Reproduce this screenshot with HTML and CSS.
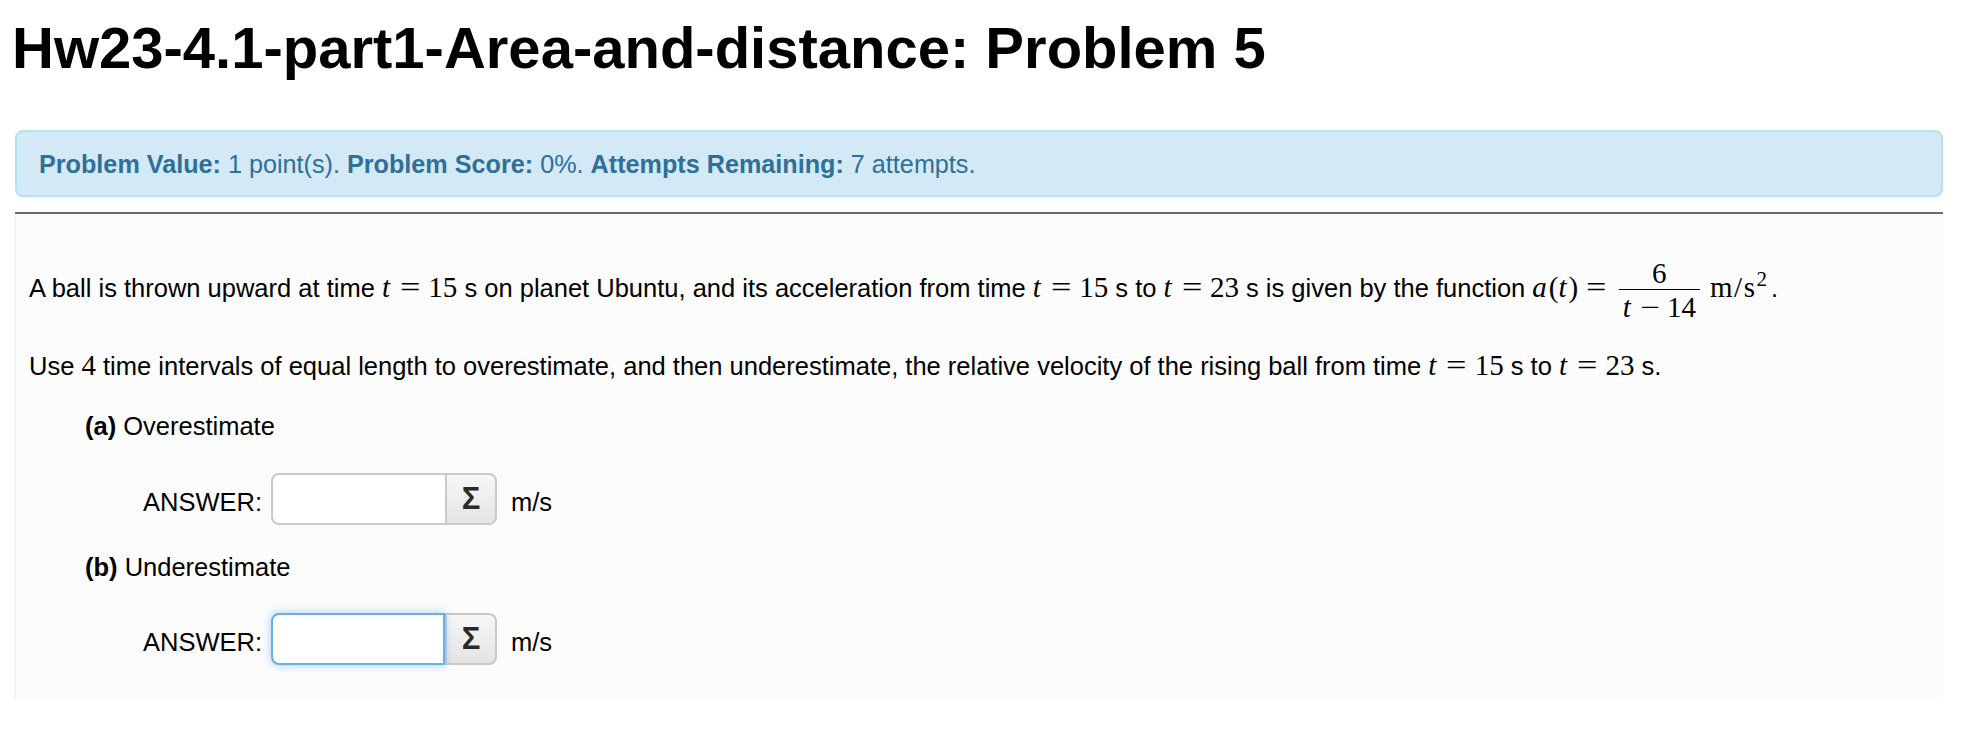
FILE: index.html
```html
<!DOCTYPE html>
<html lang="en">
<head>
<meta charset="utf-8">
<title>Hw23-4.1-part1-Area-and-distance: Problem 5</title>
<link rel="stylesheet" href="styles.css">
</head>
<body>
<div class="page">
  <h1 class="title">Hw23-4.1-part1-Area-and-distance: Problem 5</h1>
  <div class="alert"><b>Problem Value:</b> 1 point(s). <b>Problem Score:</b> 0%. <b>Attempts Remaining:</b> 7 attempts.</div>
  <hr class="rule">
  <div class="problem">
    <p class="line1">A ball is thrown upward at time <span class="m"><i>t</i><span class="op">=</span>15</span> s on planet Ubuntu, and its acceleration from time <span class="m"><i>t</i><span class="op">=</span>15</span> s to <span class="m"><i>t</i><span class="op">=</span>23</span> s is given by the function <span class="m"><i>a</i>(<i>t</i>)<span class="op">=</span><span class="frac"><span class="num">6</span><span class="den"><i>t</i><span class="minus">−</span>14</span></span><span class="unit">m/s<sup>2</sup></span></span><span class="dot">.</span></p>
    <p class="line2">Use <span class="m">4</span> time intervals of equal length to overestimate, and then underestimate, the relative velocity of the rising ball from time <span class="m"><i>t</i><span class="op">=</span>15</span> s to <span class="m"><i>t</i><span class="op">=</span>23</span> s.</p>
    <p class="part part-a"><b>(a)</b> Overestimate</p>
    <div class="answer-row row-a">
      <span class="label">ANSWER:</span>
      <span class="group">
        <span class="field"></span>
        <span class="sigma">Σ</span>
      </span>
      <span class="units">m/s</span>
    </div>
    <p class="part part-b"><b>(b)</b> Underestimate</p>
    <div class="answer-row row-b">
      <span class="label">ANSWER:</span>
      <span class="group">
        <span class="field focused"></span>
        <span class="sigma">Σ</span>
      </span>
      <span class="units">m/s</span>
    </div>
  </div>
</div>
</body>
</html>
```
FILE: styles.css
```css
html, body {
  margin: 0;
  padding: 0;
  background: #ffffff;
}
body {
  font-family: "Liberation Sans", Arial, Helvetica, sans-serif;
  font-size: 25.5px;
  line-height: 36px;
  color: #000;
}
.page {
  padding: 0 41px 0 15px;
}
.title {
  font-size: 58px;
  line-height: 64px;
  font-weight: bold;
  margin: 16px 0 50px -3px;
  color: #000;
}
.alert {
  border: 2px solid #b4e2ee;
  border-radius: 8px;
  background: #d3e9f5;
  color: #2f6f98;
  padding: 13.5px 22px;
  font-size: 25.2px;
  line-height: 36px;
}
.alert b {
  font-weight: bold;
}
.rule {
  margin: 15px 0 0;
  border: 0;
  height: 2px;
  background: #6a6a6a;
}
.problem {
  background: #fcfcfc;
  border-left: 1px solid #f0f0f0;
  padding: 46px 0 34px 13px;
}
.problem p {
  margin: 0;
}
.line2 {
  margin-top: 23px !important;
}
.m {
  font-family: "Liberation Serif", "Times New Roman", serif;
  font-size: 29px;
  line-height: 30px;
}
.m i {
  font-style: italic;
  margin-right: 2px;
}
.op {
  display: inline-block;
  margin: 0 10px;
  transform: scaleX(1.25);
}
.minus {
  display: inline-block;
  margin: 0 9px;
  transform: scaleX(1.2);
}
.frac {
  display: inline-block;
  vertical-align: -20px;
  text-align: center;
  margin: 0 4px 0 4px;
}
.num {
  display: block;
  line-height: 26px;
  padding: 0 4px 2.5px;
  border-bottom: 1.5px solid #000;
}
.den {
  display: block;
  line-height: 35px;
  padding: 0 4px;
}
.unit {
  margin-left: 6px;
  letter-spacing: 1.5px;
}
.unit sup {
  font-size: 21px;
  line-height: 0;
  vertical-align: 11px;
  letter-spacing: 0;
}
.dot {
  margin-left: 4px;
}
.part {
  margin-left: 56px !important;
}
.part-a {
  margin-top: 24px !important;
}
.part-b {
  margin-top: 24px !important;
}
.part b {
  font-weight: bold;
}
.answer-row {
  display: flex;
  align-items: flex-start;
  height: 52px;
  margin-left: 114px;
}
.row-a {
  margin-top: 29px;
}
.row-b {
  margin-top: 28px;
}
.label {
  margin-top: 11px;
  margin-right: 9px;
}
.group {
  display: flex;
  height: 52px;
}
.field {
  box-sizing: border-box;
  width: 174px;
  height: 52px;
  border: 2px solid #c9c9c9;
  border-right: 0;
  border-radius: 8px 0 0 8px;
  background: #fff;
}
.field.focused {
  border: 2px solid #6aaee6;
  box-shadow: 0 0 10px rgba(102, 175, 233, 0.6);
  position: relative;
  z-index: 1;
}
.sigma {
  box-sizing: border-box;
  width: 52px;
  height: 52px;
  border: 2px solid #c9c9c9;
  border-radius: 0 8px 8px 0;
  background: linear-gradient(#f7f7f7, #e4e4e4);
  font-weight: bold;
  font-size: 31px;
  color: #2a2a2a;
  display: flex;
  align-items: center;
  justify-content: center;
}
.units {
  margin-top: 11px;
  margin-left: 14px;
}
```
